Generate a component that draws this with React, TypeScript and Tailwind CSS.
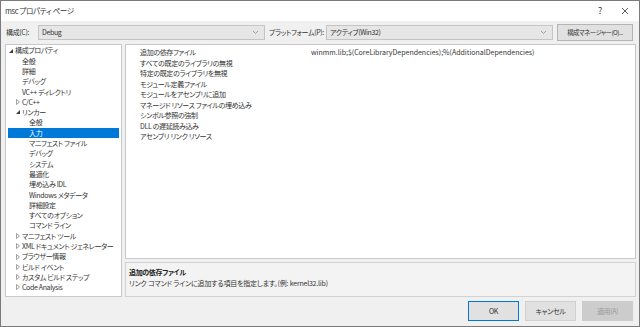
import React from "react";

type TreeItem = {
  label: string;
  level: number;
  state?: "open" | "closed";
  selected?: boolean;
};

const tree: TreeItem[] = [
  { label: "構成プロパティ", level: 0, state: "open" },
  { label: "全般", level: 1 },
  { label: "詳細", level: 1 },
  { label: "デバッグ", level: 1 },
  { label: "VC++ ディレクトリ", level: 1 },
  { label: "C/C++", level: 1, state: "closed" },
  { label: "リンカー", level: 1, state: "open" },
  { label: "全般", level: 2 },
  { label: "入力", level: 2, selected: true },
  { label: "マニフェスト ファイル", level: 2 },
  { label: "デバッグ", level: 2 },
  { label: "システム", level: 2 },
  { label: "最適化", level: 2 },
  { label: "埋め込み IDL", level: 2 },
  { label: "Windows メタデータ", level: 2 },
  { label: "詳細設定", level: 2 },
  { label: "すべてのオプション", level: 2 },
  { label: "コマンド ライン", level: 2 },
  { label: "マニフェスト ツール", level: 1, state: "closed" },
  { label: "XML ドキュメント ジェネレーター", level: 1, state: "closed" },
  { label: "ブラウザー情報", level: 1, state: "closed" },
  { label: "ビルド イベント", level: 1, state: "closed" },
  { label: "カスタム ビルド ステップ", level: 1, state: "closed" },
  { label: "Code Analysis", level: 1, state: "closed" },
];

const props = [
  "追加の依存ファイル",
  "すべての既定のライブラリの無視",
  "特定の既定のライブラリを無視",
  "モジュール定義ファイル",
  "モジュールをアセンブリに追加",
  "マネージド リソース ファイルの埋め込み",
  "シンボル参照の強制",
  "DLL の遅延読み込み",
  "アセンブリ リンク リソース",
];

const indent = ["pl-0", "pl-[7px]", "pl-[14px]"];

function Expander({ state, selected }: { state?: "open" | "closed"; selected?: boolean }) {
  if (state === "open") {
    return (
      <svg width="6" height="6" viewBox="0 0 6 6" className="shrink-0">
        <polygon points="5,1 5,5 1,5" fill={selected ? "#fff" : "#3c3c3c"} />
      </svg>
    );
  }
  if (state === "closed") {
    return (
      <svg width="6" height="6" viewBox="0 0 6 6" className="shrink-0">
        <polygon points="1.5,0.5 4.5,3 1.5,5.5" fill="none" stroke="#8a8a8a" strokeWidth="0.8" />
      </svg>
    );
  }
  return <span className="w-[6px] shrink-0" />;
}

function Chevron() {
  return (
    <svg width="7" height="5" viewBox="0 0 7 5" className="shrink-0">
      <polyline points="1,1 3.5,3.5 6,1" fill="none" stroke="#8c8c8c" strokeWidth="0.8" />
    </svg>
  );
}

function Combo({ value }: { value: string }) {
  return (
    <div className="w-[227px] h-[15px] flex items-center justify-between bg-[#e6e6e6] border border-[#c4c4c4] pl-[3px] pr-[5px]">
      <span>{value}</span>
      <Chevron />
    </div>
  );
}

export default function App() {
  return (
    <div className="w-[640px] h-[327px] flex flex-col bg-[#f0f0f0] border border-[#7a7a7a] text-[7px] tracking-[-0.35px] text-[#333] whitespace-nowrap font-['Noto_Sans_CJK_JP','Noto_Sans',sans-serif] [font-feature-settings:'palt'_1] overflow-hidden">
      <div className="h-[20px] shrink-0 flex items-center justify-between bg-white pl-[4px] pr-[10px]">
        <span className="text-[7.5px]">msc プロパティ ページ</span>
        <div className="flex items-center gap-[19px]">
          <span className="text-[9px] text-[#333]">?</span>
          <svg width="8" height="8" viewBox="0 0 8 8">
            <path d="M1 1 L7 7 M7 1 L1 7" stroke="#333" strokeWidth="0.8" />
          </svg>
        </div>
      </div>

      <div className="h-[23px] shrink-0 flex items-center pl-[5px]">
        <span className="w-[32px]">構成(C):</span>
        <Combo value="Debug" />
        <span className="w-[57px] ml-[4px]">プラットフォーム(P):</span>
        <Combo value="アクティブ(Win32)" />
        <div className="w-[76px] h-[17px] ml-[4px] flex items-center justify-center bg-[#e1e1e1] border border-[#b4b4b4] text-[6.4px] tracking-[-0.5px]">
          構成マネージャー(O)...
        </div>
      </div>

      <div className="h-[253px] shrink-0 flex gap-[3px] pl-[4px] pr-[3px]">
        <div className="w-[117px] shrink-0 bg-white border border-[#c8c8c8] pt-[0.5px] px-[2px] overflow-hidden">
          {tree.map((item, i) => (
            <div
              key={i}
              className={`h-[10.3px] flex items-center gap-[1px] ${indent[item.level]} ${
                item.selected ? "bg-[#0078d7] text-white" : ""
              }`}
            >
              <Expander state={item.state} selected={item.selected} />
              <span>{item.label}</span>
            </div>
          ))}
        </div>

        <div className="flex-1 flex flex-col gap-[3px]">
          <div className="h-[215px] bg-white border border-[#c8c8c8] pt-[2px]">
            {props.map((p, i) => (
              <div key={i} className="h-[10.5px] flex items-center">
                <span className="w-[185px] pl-[14px] shrink-0">{p}</span>
                {i === 0 && (
                  <span className="tracking-normal">
                    winmm.lib;$(CoreLibraryDependencies);%(AdditionalDependencies)
                  </span>
                )}
              </div>
            ))}
          </div>
          <div className="flex-1 border border-[#d2d2d2] bg-[#f3f3f3] pl-[3px] pt-[4px] leading-[11px]">
            <div className="font-bold text-[#222]">追加の依存ファイル</div>
            <div className="tracking-[-0.2px]">リンク コマンド ラインに追加する項目を指定します。(例: kernel32.lib)</div>
          </div>
        </div>
      </div>

      <div className="flex-1 flex items-center justify-end gap-[6px] pr-[6px] pb-[1px]">
        <div className="w-[51px] h-[20px] flex items-center justify-center bg-[#e1e1e1] border border-[#0078d7]">
          OK
        </div>
        <div className="w-[51px] h-[20px] flex items-center justify-center bg-[#e1e1e1] border border-[#d0d0d0]">
          キャンセル
        </div>
        <div className="w-[51px] h-[20px] flex items-center justify-center bg-[#cccccc] border border-[#cccccc] text-[#9a9a9a]">
          適用(A)
        </div>
      </div>
    </div>
  );
}
